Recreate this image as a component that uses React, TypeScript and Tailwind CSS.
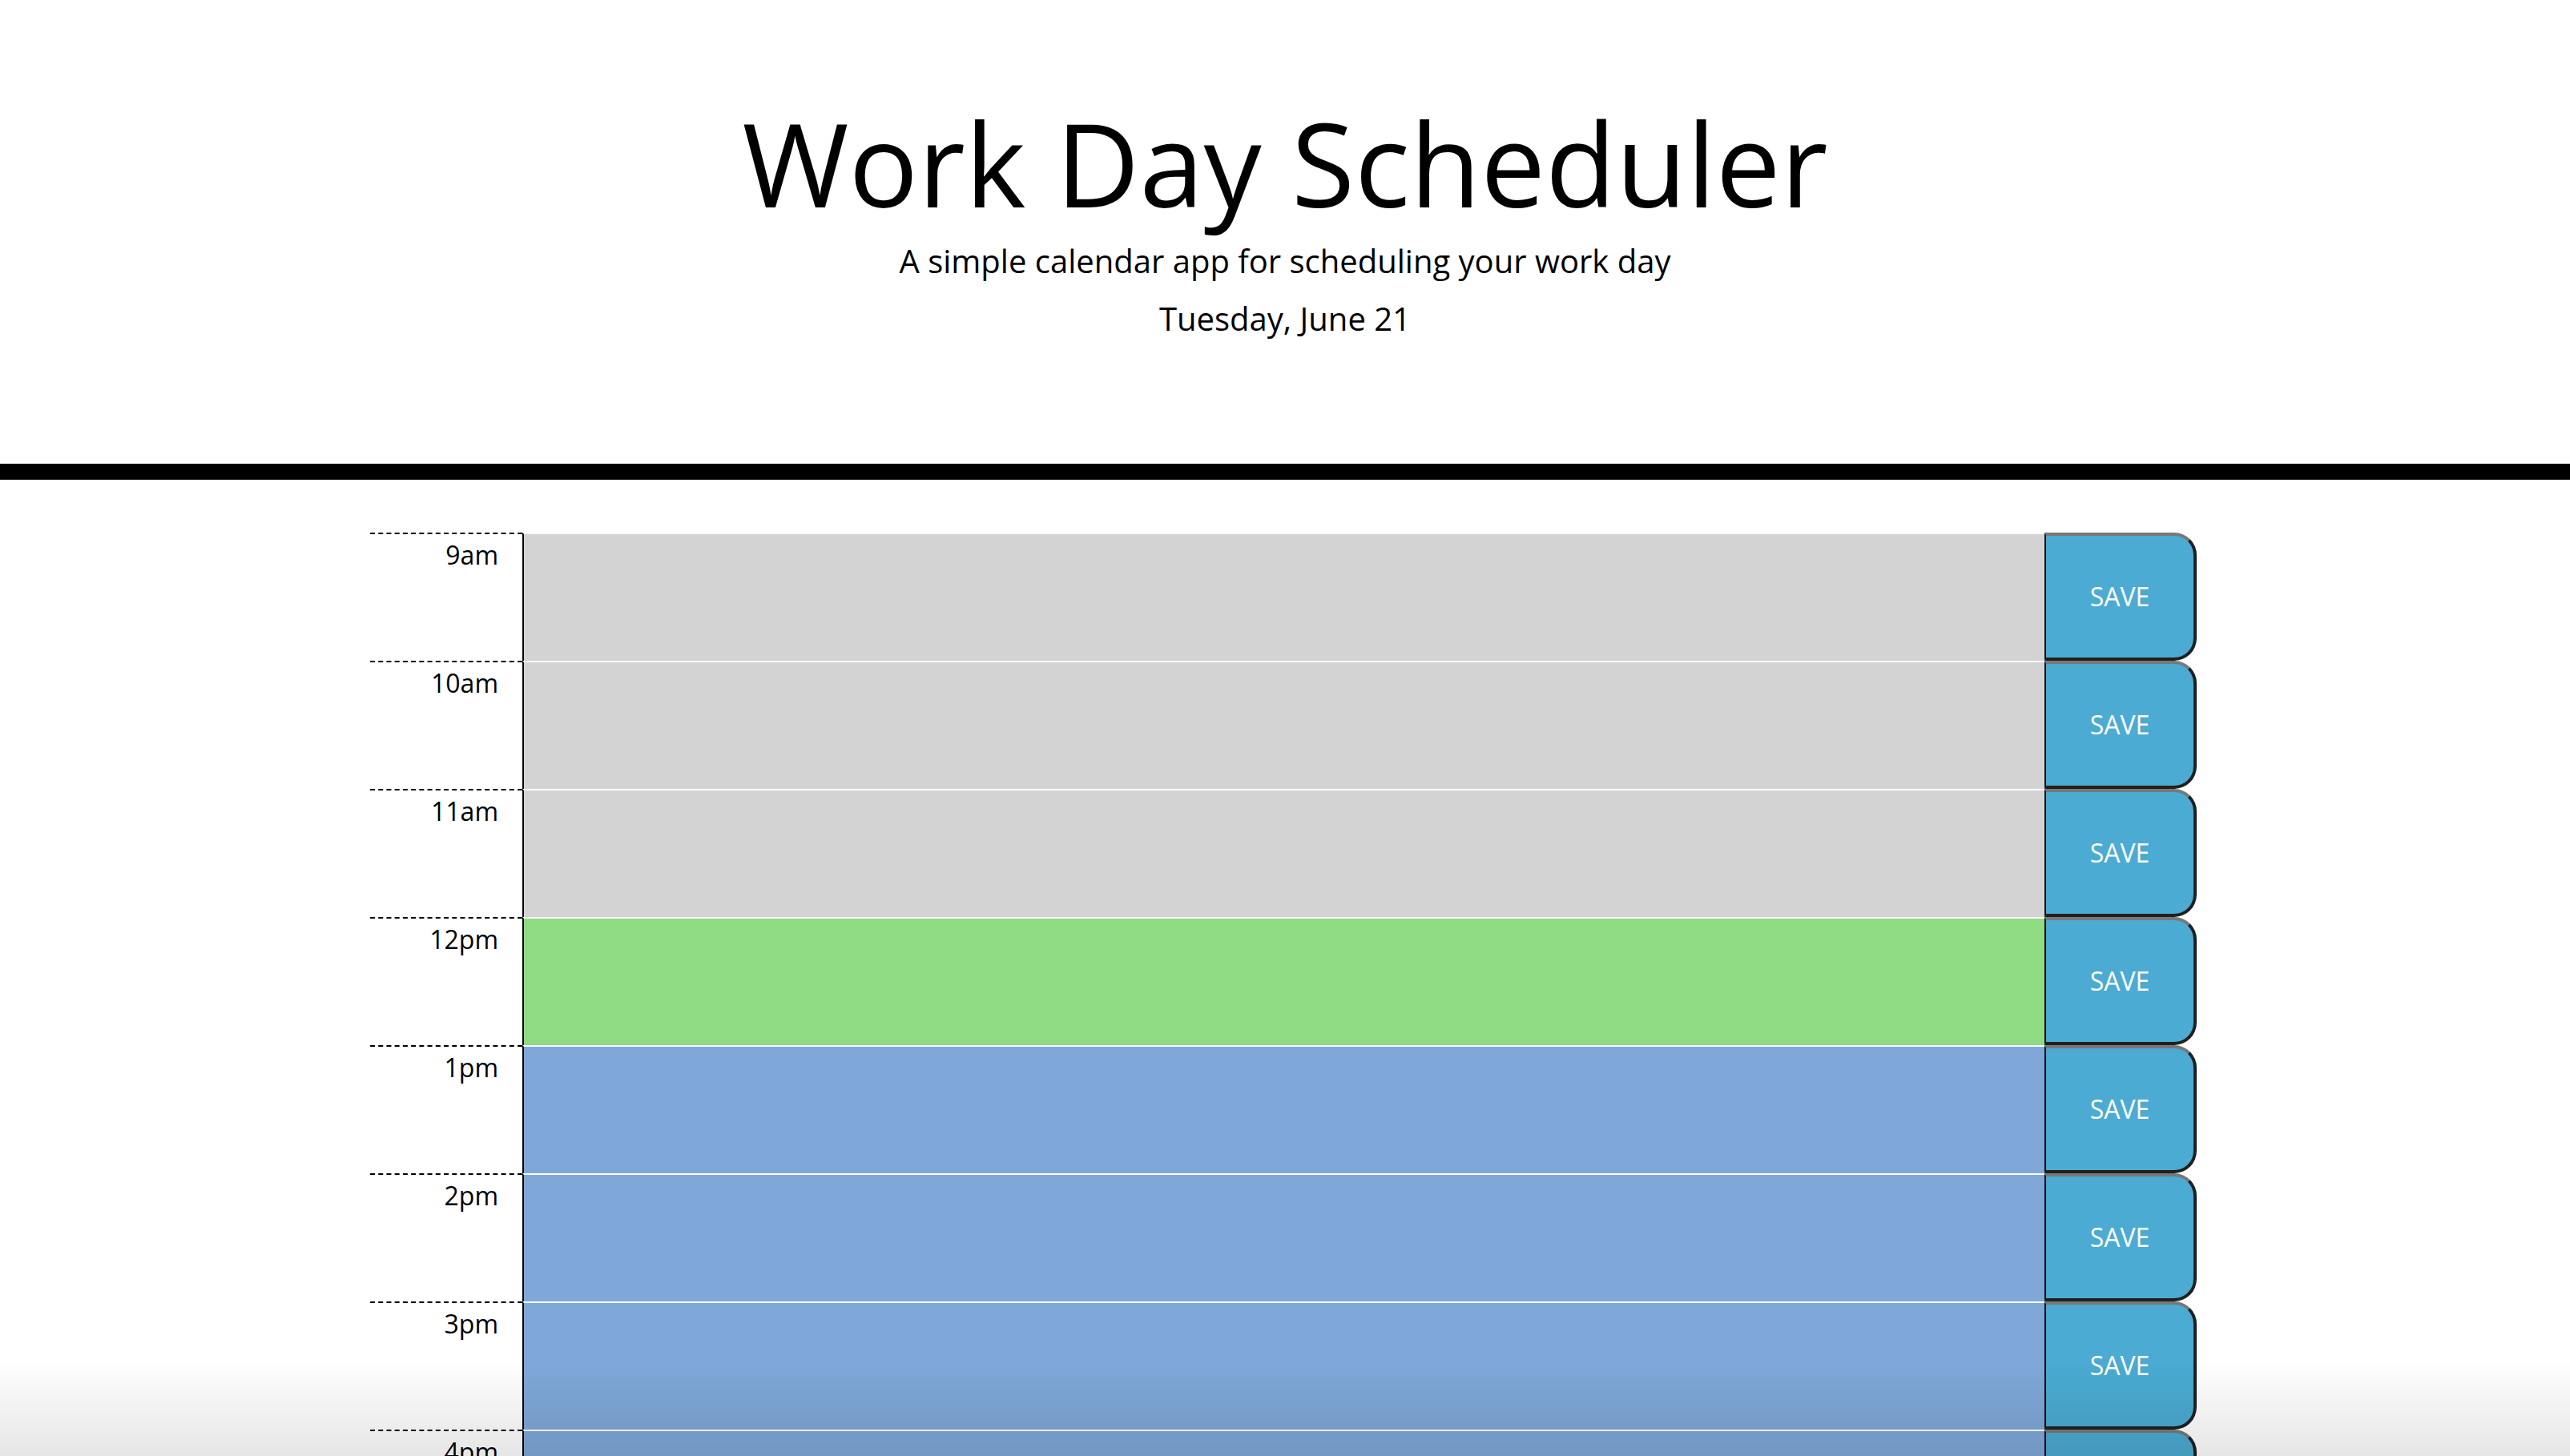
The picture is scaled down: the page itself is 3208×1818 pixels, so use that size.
import { useState } from "react";

type Slot = { label: string; tone: "past" | "present" | "future" };

const slots: Slot[] = [
  { label: "9am", tone: "past" },
  { label: "10am", tone: "past" },
  { label: "11am", tone: "past" },
  { label: "12pm", tone: "present" },
  { label: "1pm", tone: "future" },
  { label: "2pm", tone: "future" },
  { label: "3pm", tone: "future" },
  { label: "4pm", tone: "future" },
  { label: "5pm", tone: "future" },
];

const toneClass = {
  past: "bg-[#d3d3d3]",
  present: "bg-[#8fdb82]",
  future: "bg-[#7fa8d9]",
};

function TimeBlock({ slot }: { slot: Slot }) {
  const [text, setText] = useState("");

  return (
    <div className="flex h-[160px]">
      <div className="w-[190px] shrink-0 border-t-2 border-dashed border-black bg-white pt-[2px] pr-[30px] text-right text-[32px] leading-[48px] text-black">
        {slot.label}
      </div>
      <textarea
        value={text}
        onChange={(e) => setText(e.target.value)}
        className={`flex-1 resize-none border-t-2 border-l-2 border-t-white border-l-black p-5 text-[32px] text-black outline-none ${toneClass[slot.tone]}`}
      />
      <button
        onClick={() => localStorage.setItem(slot.label, text)}
        className="w-[190px] shrink-0 rounded-r-[28px] border-t-4 border-r-4 border-b-4 border-l-2 border-t-[#787878] border-r-[#202020] border-b-[#202020] border-l-black bg-[#4babd2] text-[32px] text-white"
      >
        SAVE
      </button>
    </div>
  );
}

export default function App() {
  return (
    <div className="min-h-screen bg-white font-['Open_Sans',sans-serif] text-black">
      <header className="border-b-[20px] border-black pt-[117px] pb-[151px] text-center">
        <h1 className="text-[144px] leading-[1.2] font-normal">Work Day Scheduler</h1>
        <p className="mt-[6px] text-[40px] leading-[60px]">A simple calendar app for scheduling your work day</p>
        <p className="mt-[12px] text-[40px] leading-[60px]">Tuesday, June 21</p>
      </header>

      <div className="mx-auto mt-[66px] w-[2284px] pr-[4px] pb-16">
        {slots.map((slot) => (
          <TimeBlock key={slot.label} slot={slot} />
        ))}
      </div>

      <div className="pointer-events-none fixed inset-x-0 bottom-0 h-[120px] bg-linear-to-b from-black/0 to-black/10" />
    </div>
  );
}
